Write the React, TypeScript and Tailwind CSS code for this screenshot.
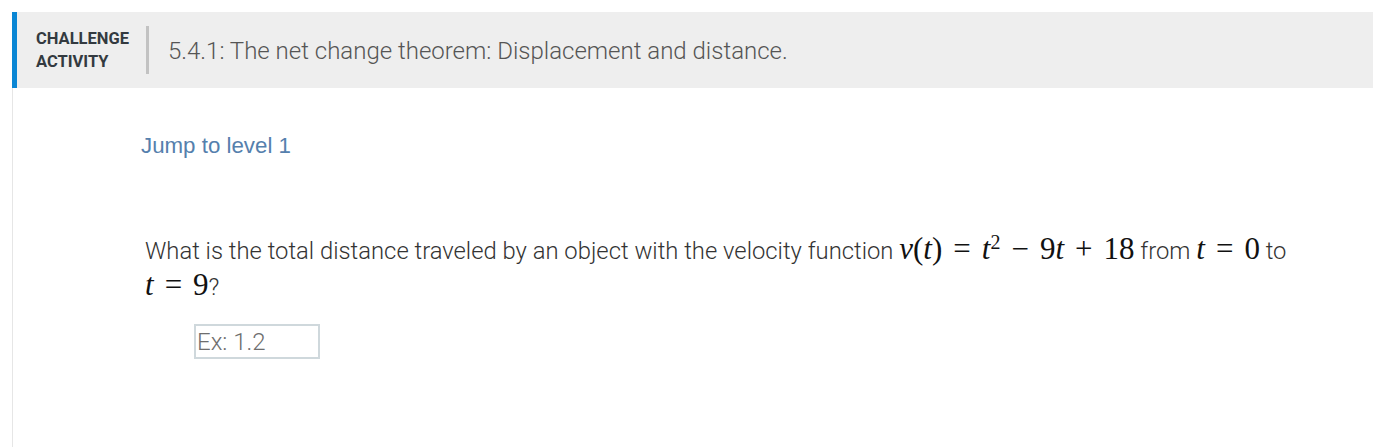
import React from "react";

const M = ({ children }: { children: React.ReactNode }) => (
  <span className="text-[31px] leading-[30px] text-[#111]" style={{ fontFamily: '"Liberation Serif", "DejaVu Serif", serif' }}>
    {children}
  </span>
);

const I = ({ children }: { children: React.ReactNode }) => <i>{children}</i>;
const Op = ({ children }: { children: React.ReactNode }) => <span className="mx-[11px]">{children}</span>;

export default function App() {
  return (
    <div className="min-h-[447px] bg-white pt-3 pl-3" style={{ fontFamily: "Roboto, sans-serif" }}>
      <div className="border-l-[1px] border-[#e6e6e6] min-h-[435px]">
        {/* Header */}
        <div className="flex items-center h-[76px] bg-[#eeeeee] border-l-[5px] border-[#0a86d4] -ml-[1px]">
          <div className="pl-[19px] pr-[17px] text-[16.5px] font-bold leading-[23px] text-[#333a40]">
            CHALLENGE
            <br />
            ACTIVITY
          </div>
          <div className="w-[3px] h-[48px] bg-[#c2c2c2]" />
          <div className="pl-[19px] pt-[2px] text-[24px] font-light text-[#555]">
            5.4.1: The net change theorem: Displacement and distance.
          </div>
        </div>

        {/* Body */}
        <div className="pl-[128px] pt-[41px]">
          <div
            className="text-[22.3px] text-[#5580ad]"
            style={{ fontFamily: '"Liberation Sans", Arial, sans-serif' }}
          >
            Jump to level 1
          </div>
          <div className="pt-[71px] pl-[4px] pr-[66px] text-[23.8px] font-light leading-[36px] text-[#333]">
            What is the total distance traveled by an object with the velocity function{" "}
            <M>
              <I>v</I>(<I>t</I>)<Op>=</Op>
              <I>t</I>
              <sup className="text-[20px]">2</sup>
              <Op>−</Op>9<I>t</I>
              <Op>+</Op>18
            </M>{" "}
            from{" "}
            <M>
              <I>t</I>
              <Op>=</Op>0
            </M>{" "}
            to{" "}
            <M>
              <I>t</I>
              <Op>=</Op>9
            </M>
            ?
          </div>
          <div className="pt-[19px] pl-[53px]">
            <input
              placeholder="Ex: 1.2"
              className="w-[126px] h-[35px] border-2 border-[#cfd8dc] px-[1px] text-[24px] font-light text-[#333] placeholder:text-[#6e6e6e] outline-none"
            />
          </div>
        </div>
      </div>
    </div>
  );
}
